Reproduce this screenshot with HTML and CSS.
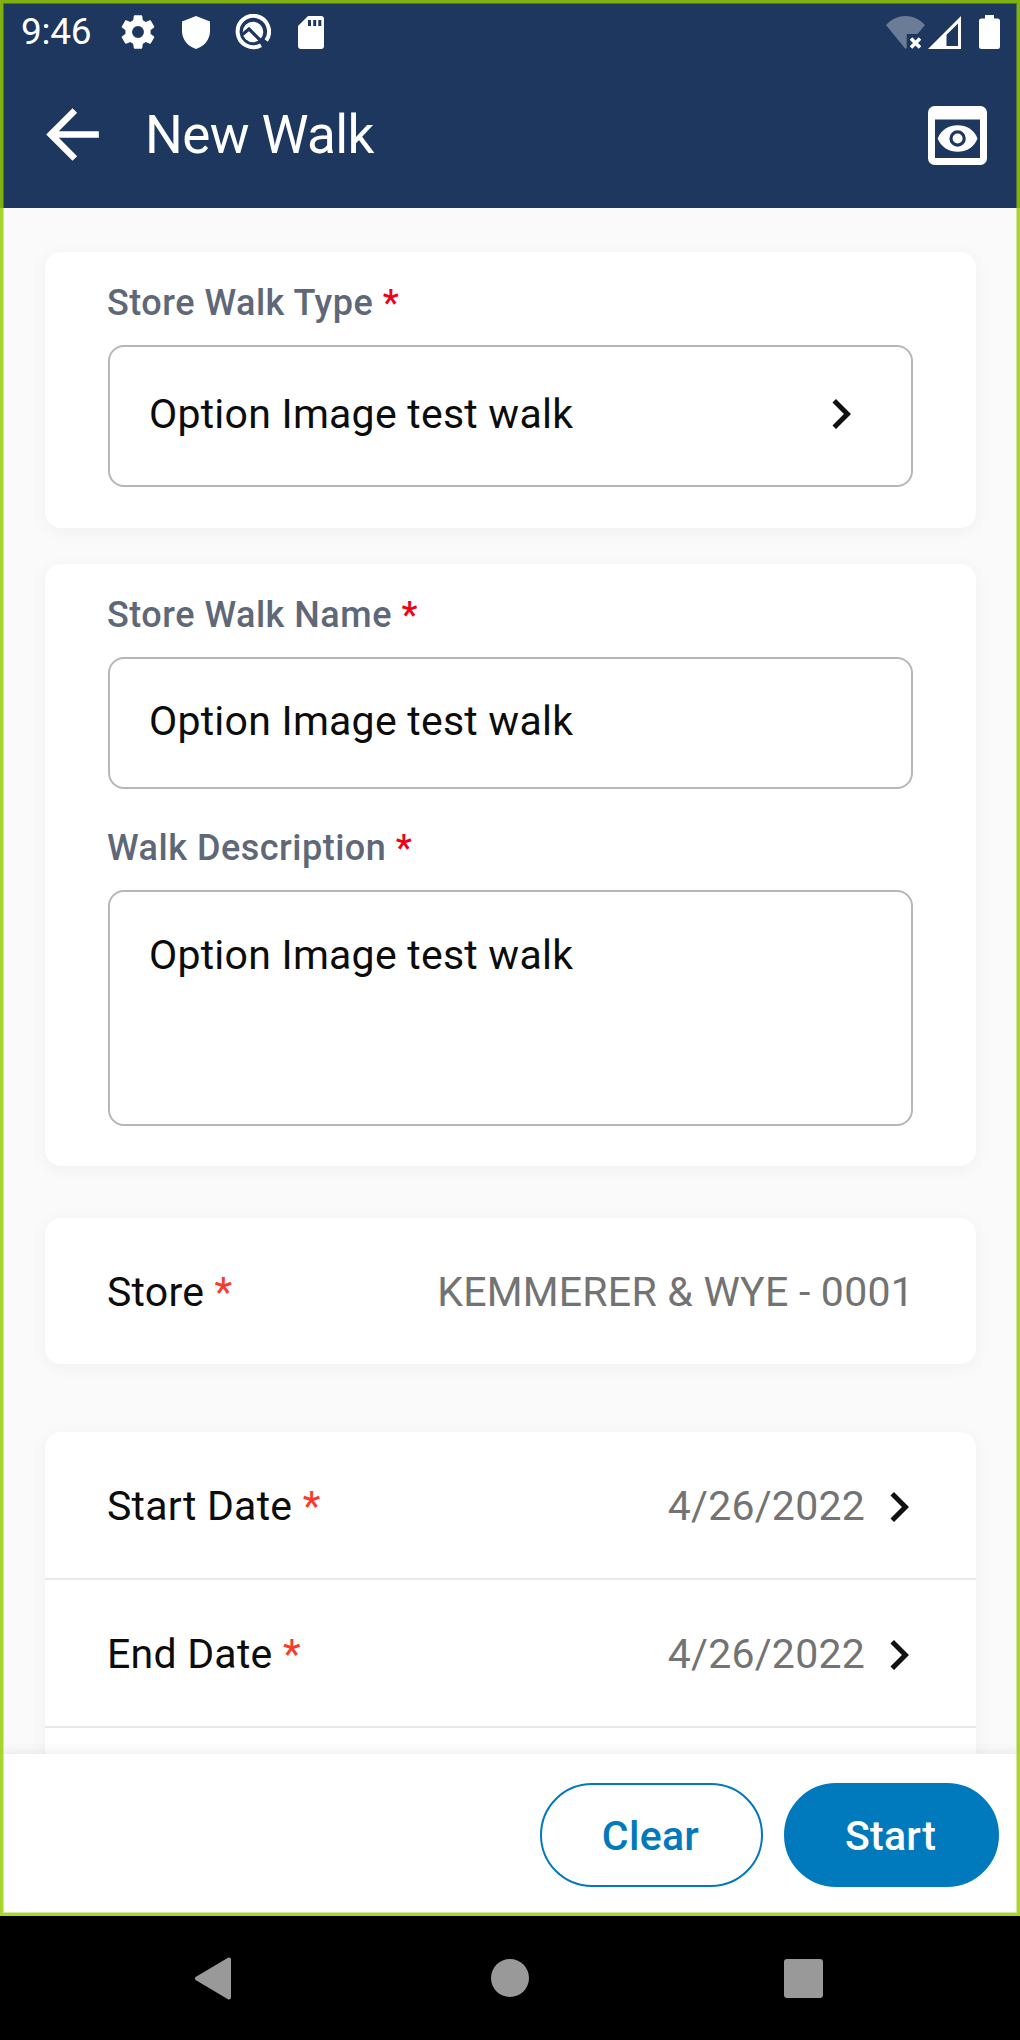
FILE: index.html
```html
<!DOCTYPE html>
<html lang="en">
<head>
<meta charset="utf-8">
<title>New Walk</title>
<link rel="stylesheet" href="styles.css">
</head>
<body>
<div class="app">
  <header class="header">
    <div class="status">
      <span class="clock">9:46</span>
      <svg class="s-gear" width="42" height="42" viewBox="0 0 24 24"><path fill="#fff" d="M19.14 12.94c.04-.3.06-.61.06-.94 0-.32-.02-.64-.07-.94l2.03-1.58c.18-.14.23-.41.12-.61l-1.92-3.32c-.12-.22-.37-.29-.59-.22l-2.39.96c-.5-.38-1.03-.7-1.62-.94l-.36-2.54c-.04-.24-.24-.41-.48-.41h-3.84c-.24 0-.43.17-.47.41l-.36 2.54c-.59.24-1.13.57-1.62.94l-2.39-.96c-.22-.08-.47 0-.59.22L2.74 8.87c-.12.21-.08.47.12.61l2.03 1.58c-.05.3-.09.63-.09.94s.02.64.07.94l-2.03 1.58c-.18.14-.23.41-.12.61l1.92 3.32c.12.22.37.29.59.22l2.39-.96c.5.38 1.03.7 1.62.94l.36 2.54c.05.24.24.41.48.41h3.84c.24 0 .44-.17.47-.41l.36-2.54c.59-.24 1.13-.56 1.62-.94l2.39.96c.22.08.47 0 .59-.22l1.92-3.32c.12-.22.07-.47-.12-.61l-2.01-1.58zM12 15.4a3.4 3.4 0 1 1 0-6.8 3.4 3.4 0 0 1 0 6.8z"/></svg>
      <svg class="s-shield" width="28" height="33" viewBox="0 0 28 33"><path fill="#fff" d="M14 0 28 5.500V15c0 8.500-5.800 15.500-14 18C5.800 30.500 0 23.500 0 15V5.500z"/></svg>
      <svg class="s-logo" width="36" height="36" viewBox="0 0 36 36"><path d="M26 31.200A15.700 15.700 0 1 1 31.200 26.500" fill="none" stroke="#fff" stroke-width="4"/><circle cx="18" cy="18" r="10.300" fill="#fff"/><path d="M7.500 20.500 14 15l14 14" fill="none" stroke="#1d375f" stroke-width="3.200"/></svg>
      <svg class="s-sd" width="26" height="33" viewBox="0 0 26 33"><path fill="#fff" d="M10 0h13a3 3 0 0 1 3 3v27a3 3 0 0 1-3 3H3a3 3 0 0 1-3-3V10z"/><path fill="#1d375f" d="M10 4h3v6h-3zM15.200 4h3v6h-3zM20.300 4h3v6h-3z"/></svg>
      <svg class="s-wifi" width="39" height="33" viewBox="0 0 39 33"><path fill="#fff" fill-opacity=".35" d="M0 9C11-3 28-3 39 9l-7.500 9H20.700v13.800L19.500 33z"/><path d="M25 22.500l9 9M34 22.500l-9 9" stroke="#fff" stroke-width="3.600"/></svg>
      <svg class="s-cell" width="33" height="33" viewBox="0 0 33 33"><path fill="#fff" fill-rule="evenodd" d="M33 0v33H0zM30 7.500 18.500 18.700V30H30z"/></svg>
      <svg class="s-battery" width="21" height="34" viewBox="0 0 21 34"><path fill="#fff" d="M6 0h9v3.500h3.500A2.500 2.500 0 0 1 21 6v25.500a2.500 2.500 0 0 1-2.500 2.500h-16A2.500 2.500 0 0 1 0 31.500V6a2.500 2.500 0 0 1 2.500-2.500H6z"/></svg>
    </div>
    <div class="toolbar">
      <svg class="back" width="79" height="79" viewBox="0 0 24 24"><path fill="#fff" d="M20 11H7.830l5.590-5.590L12 4l-8 8 8 8 1.410-1.410L7.830 13H20v-2z"/></svg>
      <h1 class="title">New Walk</h1>
      <svg class="preview" width="59" height="59" viewBox="0 0 59 59"><rect width="59" height="59" rx="6.500" fill="#fff"/><path fill="#1d375f" d="M7 13.500h45v38.500H7z"/><path fill="#fff" d="M9.700 32.500C16 14.800 43.300 14.800 49.500 32.500 43.300 50.200 16 50.200 9.700 32.500z"/><circle cx="29.600" cy="32.500" r="6.600" fill="none" stroke="#1d375f" stroke-width="3.200"/></svg>
    </div>
  </header>

  <main class="content">
    <section class="card card-type">
      <label class="label">Store Walk Type <b class="req">*</b></label>
      <div class="field select"><span>Option Image test walk</span>
        <svg class="chevron" width="60" height="60" viewBox="0 0 24 24"><path fill="#111" d="M10 6 8.590 7.410 13.170 12l-4.580 4.590L10 18l6-6z"/></svg>
      </div>
    </section>
    <section class="card card-name">
      <label class="label">Store Walk Name <b class="req">*</b></label>
      <div class="field input"><span>Option Image test walk</span></div>
      <label class="label label-desc">Walk Description <b class="req">*</b></label>
      <div class="field area"><span>Option Image test walk</span></div>
    </section>
    <section class="card card-store">
      <div class="row"><span class="key">Store <b class="star">*</b></span><span class="value store">KEMMERER &amp; WYE - 0001</span></div>
    </section>
    <section class="card card-dates">
      <div class="row line"><span class="key">Start Date <b class="star">*</b></span><span class="value">4/26/2022</span>
        <svg class="chevron" width="60" height="60" viewBox="0 0 24 24"><path fill="#111" d="M10 6 8.590 7.410 13.170 12l-4.580 4.590L10 18l6-6z"/></svg></div>
      <div class="row line"><span class="key">End Date <b class="star">*</b></span><span class="value">4/26/2022</span>
        <svg class="chevron" width="60" height="60" viewBox="0 0 24 24"><path fill="#111" d="M10 6 8.590 7.410 13.170 12l-4.580 4.590L10 18l6-6z"/></svg></div>
    </section>
  </main>

  <footer class="actions">
    <button class="btn clear">Clear</button>
    <button class="btn start">Start</button>
  </footer>
  <div class="frame"></div>
</div>
<nav class="navbar">
  <svg width="38" height="43" viewBox="0 0 38 43"><path fill="#999" stroke="#999" stroke-width="4" stroke-linejoin="round" d="M3 21.500 35 2.500v38z"/></svg>
  <svg class="home" width="38" height="38" viewBox="0 0 38 38"><circle cx="19" cy="19" r="19" fill="#999"/></svg>
  <svg width="39" height="39" viewBox="0 0 39 39"><rect width="39" height="39" rx="3" fill="#999"/></svg>
</nav>
</body>
</html>
```

FILE: styles.css
```css
* { box-sizing: border-box; }
body {
  margin: 0;
  width: 1020px;
  height: 2040px;
  overflow: hidden;
  background: #000;
  font-family: Roboto, "Liberation Sans", sans-serif;
  color: #0c0c0c;
}
svg { display: block; flex: none; }
.app {
  position: relative;
  height: 1916px;
  display: flex;
  flex-direction: column;
  background: #fafafa;
}
.frame {
  position: absolute;
  inset: 0;
  border: 3px solid rgba(149, 205, 0, .82);
  box-shadow: inset 0 0 0 1px rgba(149, 205, 0, .4);
  pointer-events: none;
}

/* Header */
.header { height: 208px; flex: none; background: #1d375f; }
.status { height: 64px; display: flex; align-items: center; padding-left: 21px; }
.clock { width: 96px; font-size: 37px; line-height: 64px; letter-spacing: -.3px; color: #fff; }
.s-shield { margin-left: 23px; }
.s-logo { margin-left: 25px; }
.s-sd { margin-left: 27px; }
.s-wifi { margin-left: auto; }
.s-cell { margin-left: 3px; }
.s-battery { margin: 0 20px 0 18px; }
.toolbar { height: 144px; display: flex; align-items: flex-start; padding: 31px 33px 0; }
.title {
  flex: 1;
  margin: 3px 0 0 33px;
  font-size: 53px;
  line-height: 74px;
  letter-spacing: -.6px;
  font-weight: 400;
  color: #fff;
}
.preview { margin-top: 11px; }

/* Cards */
.content { flex: 1; min-height: 0; overflow: hidden; padding: 44px 44px 0 45px; }
.card {
  background: #fff;
  border-radius: 16px;
  box-shadow: 0 3px 18px rgba(0, 0, 0, .045);
}
.card-type { height: 276px; padding: 28px 63px 0; }
.card-name { height: 602px; margin-top: 36px; padding: 28px 63px 0; }
.card-store { height: 146px; margin-top: 52px; }
.card-dates { height: 400px; margin-top: 68px; }
.label {
  display: block;
  height: 65px;
  margin-left: -1px;
  font-size: 36px;
  line-height: 46px;
  letter-spacing: .5px;
  font-weight: 500;
  color: #5f6878;
}
.label-desc { height: 66px; margin-top: 35px; padding-top: 1px; }
.req { font-weight: 500; color: #f00014; }
.field {
  display: flex;
  align-items: center;
  border: 2px solid #b7b7b7;
  border-radius: 16px;
  padding: 0 38px 0 39px;
  font-size: 41px;
  line-height: 48px;
  letter-spacing: .24px;
}
.select { height: 142px; justify-content: space-between; padding-right: 40px; padding-bottom: 4px; }
.input { height: 132px; padding-bottom: 5px; }
.area { height: 236px; align-items: flex-start; padding-top: 39px; }

.row {
  height: 146px;
  display: flex;
  align-items: center;
  padding: 1px 47px 0 62px;
  font-size: 41px;
  line-height: 48px;
  letter-spacing: .24px;
}
.line { height: 148px; border-bottom: 2px solid #e6e8ec; }
.key { flex: 1; }
.star { font-weight: 400; color: #fa3b2c; }
.value { color: #737373; }
.store { margin-right: 15px; }
.row .chevron { margin: 2px 0 0 4px; }

/* Actions */
.actions {
  position: relative;
  flex: none;
  height: 162px;
  display: flex;
  justify-content: flex-end;
  gap: 21px;
  padding: 29px 21px 0;
  background: #fff;
  box-shadow: 0 -2px 12px rgba(0, 0, 0, .08);
}
.btn {
  height: 104px;
  padding: 2px 2px 0 0;
  border: 2px solid #0079bd;
  border-radius: 52px;
  font: 500 41px/48px Roboto, "Liberation Sans", sans-serif;
  letter-spacing: .3px;
}
.clear { width: 223px; background: #fff; color: #0079bd; }
.start { width: 215px; background: #0079bd; color: #fff; }

/* System navigation */
.navbar {
  height: 124px;
  display: flex;
  align-items: center;
  justify-content: space-between;
  padding: 0 197px 0 194px;
}
.home { margin-left: 3px; }
```
